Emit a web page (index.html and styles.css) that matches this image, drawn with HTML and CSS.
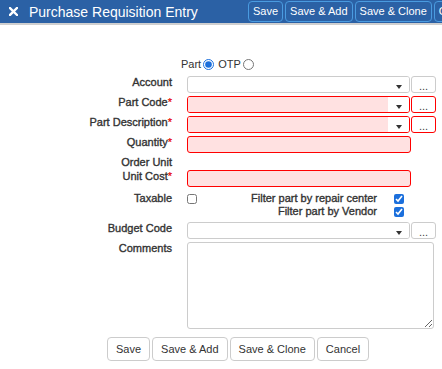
FILE: index.html
```html
<!DOCTYPE html>
<html>
<head>
<meta charset="utf-8">
<link rel="stylesheet" href="styles.css">
</head>
<body>
<header class="topbar">
  <div class="title">
    <svg class="close" width="9" height="9" viewBox="0 0 9 9"><path d="M1 1L8 8M8 1L1 8" stroke="#fff" stroke-width="2.4" stroke-linecap="square"/></svg>
    <span>Purchase Requisition Entry</span>
  </div>
  <div class="actions">
    <button class="hbtn">Save</button>
    <button class="hbtn">Save &amp; Add</button>
    <button class="hbtn">Save &amp; Clone</button>
    <button class="hbtn">Cancel</button>
  </div>
</header>

<main class="form">
  <div class="radios">
    <span>Part</span><input type="radio" name="t" class="radio" checked>
    <span class="otp">OTP</span><input type="radio" name="t" class="radio">
  </div>

  <div class="row r-account">
    <div class="lbl">Account</div>
    <div class="field">
      <div class="select"><span class="sel-val"></span><span class="sel-arrow"><i></i></span></div>
      <div class="ell">...</div>
    </div>
  </div>

  <div class="row r-gap">
    <div class="lbl">Part Code<span class="req">*</span></div>
    <div class="field">
      <div class="select required"><span class="sel-val"></span><span class="sel-arrow"><i></i></span></div>
      <div class="ell required">...</div>
    </div>
  </div>

  <div class="row r-gap">
    <div class="lbl">Part Description<span class="req">*</span></div>
    <div class="field">
      <div class="select required"><span class="sel-val"></span><span class="sel-arrow"><i></i></span></div>
      <div class="ell required">...</div>
    </div>
  </div>

  <div class="row r-gap">
    <div class="lbl">Quantity<span class="req">*</span></div>
    <div class="field"><div class="inp required"></div></div>
  </div>

  <div class="row r-gap">
    <div class="lbl">Order Unit</div>
    <div class="field"></div>
  </div>

  <div class="row r-unit">
    <div class="lbl">Unit Cost<span class="req">*</span></div>
    <div class="field"><div class="inp required"></div></div>
  </div>

  <div class="row r-tax">
    <div class="lbl">Taxable</div>
    <div class="taxfield">
      <input type="checkbox" class="cb">
      <div class="filters">
        <div class="frow"><span class="lbl">Filter part by repair center</span><input type="checkbox" class="cb" checked></div>
        <div class="frow"><span class="lbl">Filter part by Vendor</span><input type="checkbox" class="cb" checked></div>
      </div>
    </div>
  </div>

  <div class="row r-budget">
    <div class="lbl">Budget Code</div>
    <div class="field">
      <div class="select"><span class="sel-val"></span><span class="sel-arrow"><i></i></span></div>
      <div class="ell">...</div>
    </div>
  </div>

  <div class="row r-gap">
    <div class="lbl">Comments</div>
    <div class="field"><textarea class="comments"></textarea></div>
  </div>

  <div class="btns">
    <button class="btn">Save</button>
    <button class="btn">Save &amp; Add</button>
    <button class="btn">Save &amp; Clone</button>
    <button class="btn">Cancel</button>
  </div>
</main>
</body>
</html>
```
FILE: styles.css
```css
html, body {
  margin: 0;
  padding: 0;
  background: #fff;
}
body {
  font-family: "Liberation Sans", Arial, sans-serif;
  font-size: 11px;
  color: #333;
  overflow: hidden;
}

.topbar {
  display: flex;
  align-items: center;
  height: 23px;
  background: #2b61a5;
  border-bottom: 2px solid #cfcfcf;
  overflow: hidden;
  white-space: nowrap;
}
.title {
  flex: 0 0 248px;
  display: flex;
  align-items: center;
  padding-left: 9px;
  box-sizing: border-box;
  color: #fff;
  font-size: 14px;
  padding-top: 1px;
}
.close {
  display: block;
  margin-right: 11px;
  margin-top: -2px;
}
.actions {
  display: flex;
  gap: 2px;
  flex: none;
}
.hbtn {
  height: 21px;
  padding: 0 4px;
  border: 1px solid #4a9be0;
  border-radius: 4px;
  background: #2b61a5;
  color: #fff;
  font-family: "Liberation Sans", Arial, sans-serif;
  font-size: 11px;
  line-height: 19px;
  margin: 0;
}

.form {
  padding-top: 33px;
}

.radios {
  display: flex;
  align-items: center;
  padding-left: 181px;
  height: 12px;
  line-height: 12px;
}
.radio {
  width: 11px;
  height: 11px;
  margin: 1px 0 0 2px;
  accent-color: #1b6fdc;
}
.otp {
  margin-left: 4px;
}

.row {
  display: grid;
  grid-template-columns: 172px 1fr;
  column-gap: 15px;
  align-items: start;
}
.r-account { margin-top: 6px; }
.r-gap { margin-top: 3px; }
.r-unit { margin-top: 2px; }
.r-tax { margin-top: 5px; }
.r-budget { margin-top: 4px; }

.lbl {
  text-align: right;
  line-height: 12px;
  min-height: 12px;
  white-space: nowrap;
  color: #333;
  -webkit-text-stroke: 0.35px #333;
}
.req {
  color: #e60000;
  -webkit-text-stroke: 0.2px #e60000;
}

.field {
  display: flex;
  align-items: flex-start;
}

.select {
  display: flex;
  width: 223px;
  height: 17px;
  box-sizing: border-box;
  border: 1px solid #cccccc;
  border-radius: 3px;
  overflow: hidden;
  background: #fff;
}
.sel-val {
  flex: 1;
}
.sel-arrow {
  width: 21px;
  background: #fff;
  display: flex;
  justify-content: center;
  padding-top: 8px;
  box-sizing: border-box;
}
.sel-arrow i {
  display: block;
  width: 0;
  height: 0;
  border-left: 3px solid transparent;
  border-right: 3px solid transparent;
  border-top: 4px solid #333;
}
.select.required {
  border-color: #f00;
}
.select.required .sel-val {
  background: #ffe1e1;
}

.ell {
  width: 25px;
  height: 17px;
  margin-left: 1px;
  box-sizing: border-box;
  border: 1px solid #cccccc;
  border-radius: 3px;
  background: #fff;
  display: flex;
  align-items: flex-end;
  justify-content: center;
  line-height: 11px;
  color: #444;
}
.ell.required {
  border-color: #f00;
}

.inp {
  width: 224px;
  height: 17px;
  box-sizing: border-box;
  border: 1px solid #cccccc;
  border-radius: 3px;
  background: #fff;
}
.inp.required {
  border-color: #f00;
  background: #ffe1e1;
}

.cb {
  width: 10px;
  height: 10px;
  margin: 2px 0 0 0;
  accent-color: #1b6fdc;
  flex: none;
}

.taxfield {
  display: flex;
  width: 217px;
  align-items: flex-start;
}
.filters {
  flex: 1;
  display: flex;
  flex-direction: column;
}
.frow {
  display: flex;
  justify-content: flex-end;
  align-items: flex-start;
  gap: 17px;
  height: 13px;
}

.comments {
  display: block;
  width: 247px;
  height: 87px;
  box-sizing: border-box;
  margin: 0;
  border: 1px solid #cccccc;
  border-radius: 3px;
  background: #fff;
  font-family: "Liberation Sans", Arial, sans-serif;
  font-size: 11px;
}

.btns {
  display: flex;
  gap: 2px;
  padding-left: 107px;
  margin-top: 8px;
}
.btn {
  height: 24px;
  padding: 0 8px;
  margin: 0;
  border: 1px solid #cccccc;
  border-radius: 4px;
  background: #fff;
  color: #333;
  font-family: "Liberation Sans", Arial, sans-serif;
  font-size: 11px;
}
```
